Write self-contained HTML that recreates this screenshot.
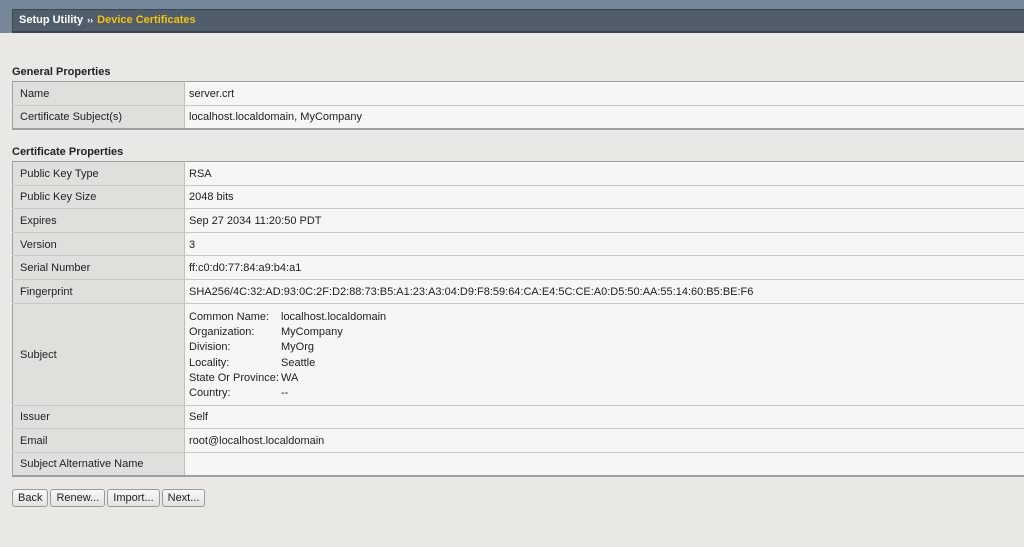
<!DOCTYPE html>
<html><head><style>
*{margin:0;padding:0;box-sizing:border-box}
body{width:1024px;height:547px;background:#e9e8e4;font-family:"Liberation Sans",Arial,sans-serif;font-size:11px;color:#222;position:relative;overflow:hidden}
.top{position:absolute;left:0;top:0;width:1024px;height:33px;background:#768799}
.bar{position:absolute;left:12px;top:9px;width:1012px;height:24px;background:#505d6b;border:1px solid #3d4650;border-right:none;border-bottom:2px solid #3a424c;color:#fff;font-weight:bold;font-size:11px;line-height:20px;padding-left:6px}
.bar .y{color:#f4c20f}
.bar .a{font-size:9px;margin:0 4px}
h3{position:absolute;left:12px;font-size:11px;font-weight:bold}
table{position:absolute;left:12px;width:1012px;border-collapse:collapse;border-top:1px solid #a0a0a0;border-left:1px solid #a0a0a0;border-bottom:2px solid #a0a0a0}
td{height:23.6px;border-bottom:1px solid #c8c8c6;padding:1px 0 0 4px;vertical-align:middle;background:#f6f6f5}
td.l{width:172px;background:#e0dfdc;border-right:1px solid #c0c0be;padding-left:7px}
.sub{line-height:15.3px;padding:5px 0 3px}
.sub span{display:inline-block;width:92px}
.btns{position:absolute;top:489px;left:12px}
.btns button{font-family:inherit;font-size:11px;height:18px;padding:0 5px;border:1px solid #9a9a9a;border-radius:3px;background:linear-gradient(#f8f8f8,#e2e2e2);margin-right:2px;color:#222}
</style></head><body>
<div class="top"></div>
<div class="bar">Setup Utility<span class="a">››</span><span class="y">Device Certificates</span></div>
<h3 style="top:66px">General Properties</h3>
<table style="top:81px">
<tr><td class="l">Name</td><td>server.crt</td></tr>
<tr><td class="l">Certificate Subject(s)</td><td>localhost.localdomain, MyCompany</td></tr>
</table>
<h3 style="top:146px">Certificate Properties</h3>
<table style="top:161px">
<tr><td class="l">Public Key Type</td><td>RSA</td></tr>
<tr><td class="l">Public Key Size</td><td>2048 bits</td></tr>
<tr><td class="l">Expires</td><td>Sep 27 2034 11:20:50 PDT</td></tr>
<tr><td class="l">Version</td><td>3</td></tr>
<tr><td class="l">Serial Number</td><td>ff:c0:d0:77:84:a9:b4:a1</td></tr>
<tr><td class="l">Fingerprint</td><td>SHA256/4C:32:AD:93:0C:2F:D2:88:73:B5:A1:23:A3:04:D9:F8:59:64:CA:E4:5C:CE:A0:D5:50:AA:55:14:60:B5:BE:F6</td></tr>
<tr><td class="l" style="height:102px">Subject</td><td><div class="sub"><span>Common Name:</span>localhost.localdomain<br><span>Organization:</span>MyCompany<br><span>Division:</span>MyOrg<br><span>Locality:</span>Seattle<br><span>State Or Province:</span>WA<br><span>Country:</span>--</div></td></tr>
<tr><td class="l">Issuer</td><td>Self</td></tr>
<tr><td class="l">Email</td><td>root@localhost.localdomain</td></tr>
<tr><td class="l">Subject Alternative Name</td><td></td></tr>
</table>
<div class="btns"><button>Back</button><button>Renew...</button><button>Import...</button><button>Next...</button></div>
</body></html>
